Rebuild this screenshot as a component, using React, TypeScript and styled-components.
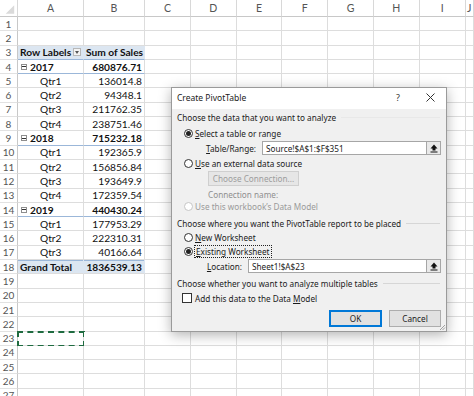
import React from 'react';
import styled, { createGlobalStyle } from 'styled-components';

const Global = createGlobalStyle`
  html, body { margin: 0; padding: 0; width: 474px; height: 396px; overflow: hidden; background: #fff; }
  #root { width: 474px; height: 396px; position: relative; overflow: hidden; }
`;

const Sheet = styled.div`
  display: grid;
  grid-template-columns: 18px 66px 61px repeat(7, 45.8px) 1fr;
  grid-template-rows: 17px;
  grid-auto-rows: 14.3px;
  font-family: Lato, "Liberation Sans", sans-serif;
  font-size: 10.2px;
  color: #111;
`;

const ColHead = styled.div`
  display: flex;
  align-items: center;
  justify-content: center;
  box-sizing: border-box;
  border-right: 1px solid #d8d8d8;
  border-bottom: 1px solid #c8c8c8;
  color: #555;
  font-size: 10.5px;
  background: #fff;
  overflow: hidden;
`;

const RowHead = styled.div`
  display: flex;
  align-items: center;
  justify-content: center;
  box-sizing: border-box;
  border-right: 1px solid #c8c8c8;
  border-bottom: 1px solid #e2e2e2;
  color: #555;
  font-size: 10px;
`;

const Cell = styled.div<{
  $fill?: string;
  $bold?: boolean;
  $right?: boolean;
  $indent?: number;
  $line?: string;
  $top?: string;
  $marquee?: boolean;
}>`
  display: flex;
  align-items: center;
  justify-content: ${(p) => (p.$right ? 'flex-end' : 'flex-start')};
  box-sizing: border-box;
  padding: 0 2px 0 ${(p) => p.$indent ?? 2}px;
  background: ${(p) => p.$fill ?? '#fff'};
  font-weight: ${(p) => (p.$bold ? 700 : 400)};
  border-right: 1px solid ${(p) => (p.$fill ? p.$fill : '#dddddd')};
  border-bottom: 1px solid ${(p) => p.$line ?? '#dddddd'};
  box-shadow: ${(p) => (p.$top ? `inset 0 1px 0 ${p.$top}` : 'none')};
  outline: ${(p) => (p.$marquee ? '2px dashed #1f6b40' : 'none')};
  outline-offset: -1px;
  white-space: nowrap;
  overflow: hidden;
  gap: 2px;
`;

const DropBtn = styled.span`
  margin-left: auto;
  width: 8px;
  height: 8px;
  box-sizing: border-box;
  border: 1px solid #b7b7b7;
  background: #f3f3f3;
  display: flex;
  align-items: center;
  justify-content: center;
`;

const Toggle = styled.span`
  width: 6px;
  height: 6px;
  box-sizing: border-box;
  border: 1px solid #8e8e8e;
  background: #fff;
  display: flex;
  align-items: center;
  justify-content: center;
  margin-right: 1px;
  &::after {
    content: '';
    width: 4px;
    height: 1px;
    background: #333;
  }
`;

/* ---------- dialog ---------- */

const Dialog = styled.div`
  position: absolute;
  left: 171px;
  top: 87px;
  width: 276px;
  height: 245px;
  box-sizing: border-box;
  border: 1px solid #9a9a9a;
  background: #f0f0f0;
  box-shadow: 0 3px 12px rgba(0, 0, 0, 0.3);
  display: flex;
  flex-direction: column;
  font-family: "Noto Sans", "Open Sans", sans-serif;
  font-size: 8.2px;
  color: #1b1b1b;
`;

const TitleBar = styled.div`
  height: 21px;
  background: #fff;
  display: flex;
  align-items: center;
  padding: 0 2px 2px 5px;
  box-sizing: border-box;
  font-size: 8.5px;
`;

const Title = styled.div`
  flex: 1;
`;

const TitleBtn = styled.div<{ $w: number }>`
  width: ${(p) => p.$w}px;
  display: flex;
  align-items: center;
  justify-content: center;
  color: #333;
  font-size: 9px;
`;

const Body = styled.div`
  flex: 1;
  display: flex;
  flex-direction: column;
  padding: 0 5px;
  position: relative;
`;

const Section = styled.div<{ $mt: number }>`
  height: 12px;
  margin-top: ${(p) => p.$mt}px;
  display: flex;
  align-items: center;
  gap: 5px;
  white-space: nowrap;
`;

const Rule = styled.div<{ $faint?: boolean }>`
  flex: 1;
  height: 1px;
  background: ${(p) => (p.$faint ? '#e8e8e8' : '#d6d6d6')};
  margin-right: 1px;
`;

const Choice = styled.div<{ $h: number; $mt?: number; $disabled?: boolean; $pl?: number }>`
  height: ${(p) => p.$h}px;
  margin-top: ${(p) => p.$mt ?? 0}px;
  padding-left: ${(p) => p.$pl ?? 7}px;
  display: flex;
  align-items: center;
  gap: 2px;
  color: ${(p) => (p.$disabled ? '#9a9a9a' : '#1b1b1b')};
  white-space: nowrap;
`;

const Radio = styled.span<{ $checked?: boolean; $disabled?: boolean }>`
  width: 9px;
  height: 9px;
  box-sizing: border-box;
  border-radius: 50%;
  border: 1px solid ${(p) => (p.$disabled ? '#c6c6c6' : '#333')};
  background: #fff;
  display: flex;
  align-items: center;
  justify-content: center;
  &::after {
    content: '';
    width: 5px;
    height: 5px;
    border-radius: 50%;
    background: ${(p) => (p.$checked ? '#222' : 'transparent')};
  }
`;

const Check = styled.span`
  width: 10px;
  height: 10px;
  box-sizing: border-box;
  border: 1px solid #333;
  background: #fff;
  margin-right: 1px;
`;

const Focus = styled.span`
  outline: 1px dotted #222;
  outline-offset: 0;
  padding: 0 1px;
`;

const U = styled.span`
  text-decoration: underline;
  text-underline-offset: 1px;
`;

const FieldRow = styled.div<{ $mt?: number }>`
  height: 14px;
  margin-top: ${(p) => p.$mt ?? 0}px;
  display: flex;
  align-items: center;
`;

const FieldLabel = styled.div<{ $w: number }>`
  width: ${(p) => p.$w}px;
  margin-right: 6px;
  text-align: right;
  white-space: nowrap;
`;

const Input = styled.div`
  flex: 1;
  height: 14px;
  box-sizing: border-box;
  border: 1px solid #a6a6a6;
  border-right: none;
  background: #fff;
  display: flex;
  align-items: center;
  padding-left: 3px;
`;

const PickBtn = styled.div`
  width: 15px;
  height: 14px;
  box-sizing: border-box;
  border: 1px solid #a6a6a6;
  background: #e9e9e9;
  display: flex;
  align-items: center;
  justify-content: center;
`;

const ConnButton = styled.div`
  margin-left: 31px;
  width: 91px;
  height: 15px;
  box-sizing: border-box;
  border: 1px solid #cfcfcf;
  background: #e6e6e6;
  color: #9d9d9d;
  display: flex;
  align-items: center;
  justify-content: center;
`;

const Note = styled.div<{ $mt: number }>`
  height: 12px;
  margin-top: ${(p) => p.$mt}px;
  padding-left: 31px;
  color: #8f8f8f;
  display: flex;
  align-items: center;
`;

const Footer = styled.div`
  margin-top: 5px;
  height: 17px;
  display: flex;
  justify-content: flex-end;
  gap: 7px;
`;

const Btn = styled.div<{ $primary?: boolean; $w: number }>`
  width: ${(p) => p.$w}px;
  height: 17px;
  box-sizing: border-box;
  border: 1px solid ${(p) => (p.$primary ? '#0078d7' : '#adadad')};
  box-shadow: ${(p) => (p.$primary ? 'inset 0 0 0 1px #0078d7' : 'none')};
  background: #e1e1e1;
  display: flex;
  align-items: center;
  justify-content: center;
`;

const Grip = styled.svg`
  position: absolute;
  right: 0;
  bottom: 0;
`;

const UpIcon = () => (
  <svg width="8" height="9" viewBox="0 0 8 9">
    <path d="M4 0.5 L7.5 4.5 H5.5 V6.5 H2.5 V4.5 H0.5 Z" fill="#111" />
    <rect x="0.5" y="7.5" width="7" height="1" fill="#111" />
  </svg>
);

const CloseIcon = () => (
  <svg width="9" height="9" viewBox="0 0 9 9">
    <path d="M0.5 0.5 L8.5 8.5 M8.5 0.5 L0.5 8.5" stroke="#333" strokeWidth="1" />
  </svg>
);

type Row = { a?: string; b?: string; kind?: 'head' | 'year' | 'qtr' | 'total' };

const data: Record<number, Row> = {
  3: { a: 'Row Labels', b: 'Sum of Sales', kind: 'head' },
  4: { a: '2017', b: '680876.71', kind: 'year' },
  5: { a: 'Qtr1', b: '136014.8', kind: 'qtr' },
  6: { a: 'Qtr2', b: '94348.1', kind: 'qtr' },
  7: { a: 'Qtr3', b: '211762.35', kind: 'qtr' },
  8: { a: 'Qtr4', b: '238751.46', kind: 'qtr' },
  9: { a: '2018', b: '715232.18', kind: 'year' },
  10: { a: 'Qtr1', b: '192365.9', kind: 'qtr' },
  11: { a: 'Qtr2', b: '156856.84', kind: 'qtr' },
  12: { a: 'Qtr3', b: '193649.9', kind: 'qtr' },
  13: { a: 'Qtr4', b: '172359.54', kind: 'qtr' },
  14: { a: '2019', b: '440430.24', kind: 'year' },
  15: { a: 'Qtr1', b: '177953.29', kind: 'qtr' },
  16: { a: 'Qtr2', b: '222310.31', kind: 'qtr' },
  17: { a: 'Qtr3', b: '40166.64', kind: 'qtr' },
  18: { a: 'Grand Total', b: '1836539.13', kind: 'total' },
};

const letters = ['A', 'B', 'C', 'D', 'E', 'F', 'G', 'H', 'I', 'J'];
const BLUE = '#dce6f1';
const LINE = '#9bb7d9';

function SheetRow({ n }: { n: number }) {
  const r = data[n] ?? {};
  const k = r.kind;
  const fill = k === 'head' || k === 'total' ? BLUE : undefined;
  const line = k === 'year' || k === 'head' ? LINE : undefined;
  const top = k === 'total' ? LINE : undefined;
  const bold = k === 'head' || k === 'year' || k === 'total';
  return (
    <>
      <RowHead>{n}</RowHead>
      <Cell
        $fill={fill}
        $bold={bold}
        $line={line}
        $top={top}
        $indent={k === 'qtr' ? 22 : k === 'year' ? 3 : 2}
        $marquee={n === 23}
      >
        {k === 'year' && <Toggle />}
        {r.a}
        {k === 'head' && (
          <DropBtn>
            <svg width="4" height="3" viewBox="0 0 4 3">
              <path d="M0 0 H4 L2 3 Z" fill="#555" />
            </svg>
          </DropBtn>
        )}
      </Cell>
      <Cell $fill={fill} $bold={bold} $line={line} $top={top} $right={k !== 'head'}>
        {r.b}
      </Cell>
      {letters.slice(2).map((l) => (
        <Cell key={l} />
      ))}
    </>
  );
}

export default function App() {
  const rows = Array.from({ length: 27 }, (_, i) => i + 1);
  return (
    <>
      <Global />
      <Sheet>
        <ColHead>
          <svg width="18" height="17" viewBox="0 0 18 17">
            <path d="M15 5 L15 14 L6 14 Z" fill="#dadada" />
          </svg>
        </ColHead>
        {letters.map((l) => (
          <ColHead key={l}>{l}</ColHead>
        ))}
        {rows.map((n) => (
          <SheetRow key={n} n={n} />
        ))}
      </Sheet>

      <Dialog>
        <TitleBar>
          <Title>Create PivotTable</Title>
          <TitleBtn $w={16}>?</TitleBtn>
          <TitleBtn $w={10} />
          <TitleBtn $w={28}>
            <CloseIcon />
          </TitleBtn>
        </TitleBar>
        <Body>
          <Section $mt={2}>
            Choose the data that you want to analyze
            <Rule $faint />
          </Section>
          <Choice $h={16} $mt={2}>
            <Radio $checked />
            <span>
              <U>S</U>elect a table or range
            </span>
          </Choice>
          <FieldRow>
            <FieldLabel $w={79}>
              <U>T</U>able/Range:
            </FieldLabel>
            <Input>Source!$A$1:$F$351</Input>
            <PickBtn>
              <UpIcon />
            </PickBtn>
          </FieldRow>
          <Choice $h={16}>
            <Radio />
            <span>
              <U>U</U>se an external data source
            </span>
          </Choice>
          <ConnButton>Choose Connection...</ConnButton>
          <Note $mt={2}>Connection name:</Note>
          <Choice $h={12} $disabled>
            <Radio $disabled />
            <span>Use this workbook’s Data Model</span>
          </Choice>
          <Section $mt={5}>
            Choose where you want the PivotTable report to be placed
            <Rule />
          </Section>
          <Choice $h={14} $mt={1}>
            <Radio />
            <span>
              <U>N</U>ew Worksheet
            </span>
          </Choice>
          <Choice $h={14}>
            <Radio $checked />
            <Focus>
              <U>E</U>xisting Worksheet
            </Focus>
          </Choice>
          <FieldRow $mt={1}>
            <FieldLabel $w={65}>
              <U>L</U>ocation:
            </FieldLabel>
            <Input>Sheet1!$A$23</Input>
            <PickBtn>
              <UpIcon />
            </PickBtn>
          </FieldRow>
          <Section $mt={4}>
            Choose whether you want to analyze multiple tables
            <Rule />
          </Section>
          <Choice $h={14} $mt={2} $pl={5}>
            <Check />
            <span>
              Add this data to the Data <U>M</U>odel
            </span>
          </Choice>
          <Footer>
            <Btn $primary $w={53}>OK</Btn>
            <Btn $w={52}>Cancel</Btn>
          </Footer>
          <Grip width="7" height="7" viewBox="0 0 7 7">
            <path d="M6 1 L1 6 M6 3.5 L3.5 6" stroke="#a0a0a0" strokeWidth="1" />
          </Grip>
        </Body>
      </Dialog>
    </>
  );
}
